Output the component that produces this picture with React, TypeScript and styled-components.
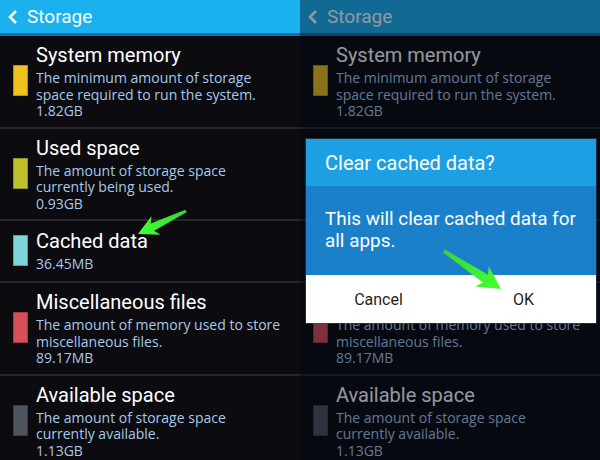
import styled, { createGlobalStyle } from "styled-components";

const GlobalStyle = createGlobalStyle`
  html, body {
    margin: 0;
    padding: 0;
    background: #0c0b0f;
  }
  body {
    font-family: Roboto, "Open Sans", "Liberation Sans", sans-serif;
  }
`;

type Item = {
  title: string;
  desc?: string[];
  size: string;
  color: string;
};

const items: Item[] = [
  {
    title: "System memory",
    desc: ["The minimum amount of storage", "space required to run the system."],
    size: "1.82GB",
    color: "#f0c21f",
  },
  {
    title: "Used space",
    desc: ["The amount of storage space", "currently being used."],
    size: "0.93GB",
    color: "#bfc12c",
  },
  { title: "Cached data", size: "36.45MB", color: "#7dd4da" },
  {
    title: "Miscellaneous files",
    desc: ["The amount of memory used to store", "miscellaneous files."],
    size: "89.17MB",
    color: "#d6505a",
  },
  {
    title: "Available space",
    desc: ["The amount of storage space", "currently available."],
    size: "1.13GB",
    color: "#4e5560",
  },
];

const Arrow = ({ x1, y1, x2, y2, w = 1 }: { x1: number; y1: number; x2: number; y2: number; w?: number }) => {
  const len = Math.hypot(x2 - x1, y2 - y1);
  const ang = (Math.atan2(y2 - y1, x2 - x1) * 180) / Math.PI;
  const h = 18 * w;
  const pts = [
    [0, -1.5 * w],
    [len - h + 2, -4 * w],
    [len - h - 2, -10.5 * w],
    [len, 0],
    [len - h - 2, 10.5 * w],
    [len - h + 2, 4 * w],
    [0, 1.5 * w],
  ]
    .map((p) => p.join(","))
    .join(" ");
  return (
    <ArrowSvg width="300" height="460">
      <defs>
        <linearGradient id={`g${x1}`} x1="0" y1="0" x2="1" y2="0">
          <stop offset="0" stopColor="#38d43a" />
          <stop offset="1" stopColor="#46ff2e" />
        </linearGradient>
      </defs>
      <polygon points={pts} fill={`url(#g${x1})`} transform={`translate(${x1} ${y1}) rotate(${ang})`} />
    </ArrowSvg>
  );
};

const StorageList = () => (
  <>
    <Header>
      <svg width="12" height="16" viewBox="0 0 12 16">
        <polyline points="9,2 3,8 9,14" fill="none" stroke="#fff" strokeWidth="2.6" />
      </svg>
      <HeaderTitle>Storage</HeaderTitle>
    </Header>
    {items.map((it) => (
      <Row key={it.title}>
        <Swatch $color={it.color} />
        <Info>
          <Title>{it.title}</Title>
          <Desc>
            {it.desc?.map((d) => (
              <div key={d}>{d}</div>
            ))}
            <div>{it.size}</div>
          </Desc>
        </Info>
      </Row>
    ))}
  </>
);

export default function App() {
  return (
    <Screen>
      <GlobalStyle />
      <Panel>
        <StorageList />
        <Arrow x1={186} y1={211} x2={138} y2={234} />
      </Panel>
      <Panel>
        <StorageList />
        <Dim />
        <Dialog>
          <DialogTitle>Clear cached data?</DialogTitle>
          <DialogBody>This will clear cached data for all apps.</DialogBody>
          <Buttons>
            <DialogButton>Cancel</DialogButton>
            <DialogButton>OK</DialogButton>
          </Buttons>
        </Dialog>
        <Arrow x1={144} y1={251} x2={201} y2={289} w={1.15} />
      </Panel>
    </Screen>
  );
}

const Screen = styled.div`
  display: flex;
  width: 600px;
  height: 460px;
  overflow: hidden;
  background: #0c0b0f;
`;

const Panel = styled.div`
  position: relative;
  width: 300px;
  height: 460px;
  overflow: hidden;
  display: flex;
  flex-direction: column;
`;

const Header = styled.div`
  height: 33px;
  flex-shrink: 0;
  display: flex;
  align-items: center;
  gap: 8px;
  padding-left: 7px;
  background: #1bb1ef;
  border-bottom: 3px solid #1a6db0;
`;

const HeaderTitle = styled.span`
  color: #fff;
  font-size: 19px;
  line-height: 1;
  margin-top: -1px;
`;

const Row = styled.div`
  box-sizing: border-box;
  min-height: 62px;
  display: flex;
  align-items: center;
  gap: 8px;
  padding: 6px 0 7px 13px;
  border-bottom: 2px solid #27262b;
  flex-shrink: 0;
`;

const Swatch = styled.div<{ $color: string }>`
  width: 15px;
  height: 31px;
  background: ${(p) => p.$color};
  box-shadow: inset 0 0 0 1px rgba(0, 0, 0, 0.25);
  flex-shrink: 0;
`;

const Info = styled.div`
  display: flex;
  flex-direction: column;
  gap: 2px;
`;

const Title = styled.div`
  color: #fff;
  font-size: 20px;
  line-height: 26px;
`;

const Desc = styled.div`
  color: #a6c9ea;
  font-family: "Open Sans", Roboto, sans-serif;
  font-size: 14px;
  line-height: 16.5px;
`;

const Dim = styled.div`
  position: absolute;
  inset: 0;
  background: rgba(2, 6, 20, 0.42);
`;

const Dialog = styled.div`
  position: absolute;
  left: 6px;
  top: 139px;
  width: 290px;
  display: flex;
  flex-direction: column;
  box-shadow: 0 0 0 1px rgba(40, 70, 100, 0.6);
`;

const DialogTitle = styled.div`
  height: 47px;
  display: flex;
  align-items: center;
  padding: 0 19px;
  background: #1d9fe3;
  color: #fff;
  font-size: 20px;
`;

const DialogBody = styled.div`
  height: 89px;
  box-sizing: border-box;
  padding: 22px 8px 0 19px;
  background: #1a80c9;
  color: #fff;
  font-size: 18.9px;
  line-height: 22px;
`;

const Buttons = styled.div`
  height: 48px;
  display: grid;
  grid-template-columns: 1fr 1fr;
  background: #fff;
`;

const DialogButton = styled.div`
  display: flex;
  align-items: center;
  justify-content: center;
  color: #1e1e1e;
  font-size: 16px;
`;

const ArrowSvg = styled.svg`
  position: absolute;
  left: 0;
  top: 0;
  pointer-events: none;
`;
